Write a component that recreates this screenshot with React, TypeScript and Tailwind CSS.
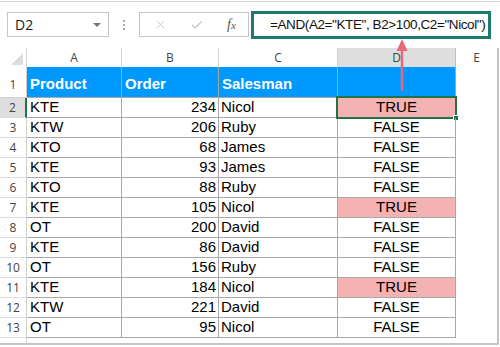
import React from 'react';
import { X, Check } from 'lucide-react';

interface RowData {
  product: string;
  order: number;
  salesman: string;
  result: boolean;
}

const rows: RowData[] = [
  { product: 'KTE', order: 234, salesman: 'Nicol', result: true },
  { product: 'KTW', order: 206, salesman: 'Ruby', result: false },
  { product: 'KTO', order: 68, salesman: 'James', result: false },
  { product: 'KTE', order: 93, salesman: 'James', result: false },
  { product: 'KTO', order: 88, salesman: 'Ruby', result: false },
  { product: 'KTE', order: 105, salesman: 'Nicol', result: true },
  { product: 'OT', order: 200, salesman: 'David', result: false },
  { product: 'KTE', order: 86, salesman: 'David', result: false },
  { product: 'OT', order: 156, salesman: 'Ruby', result: false },
  { product: 'KTE', order: 184, salesman: 'Nicol', result: true },
  { product: 'KTW', order: 221, salesman: 'David', result: false },
  { product: 'OT', order: 95, salesman: 'Nicol', result: false },
];

const cell = 'h-full border-r border-b border-[#a8a8a8] flex items-center text-[15px] text-black';

const App: React.FC = () => {
  return (
    <div className="w-[500px] h-[347px] bg-white overflow-hidden relative font-['Liberation_Sans',Arial,sans-serif]">
      <div className="h-px mt-px bg-[#d6d6d6]" />

      {/* formula bar */}
      <div className="h-[46px] flex items-start pt-[10px]">
        <div className="ml-[7px] w-[102px] h-[25px] border border-[#c6c6c6] flex items-center justify-between pl-[7px] pr-[7px] text-[14px] text-[#222] font-['Open_Sans',sans-serif]">
          <span>D2</span>
          <span className="w-0 h-0 border-l-[4px] border-r-[4px] border-t-[4px] border-l-transparent border-r-transparent border-t-[#777]" />
        </div>
        <div className="w-[30px] h-[25px] flex flex-col items-center justify-center gap-[2px]">
          <span className="w-[2px] h-[2px] bg-[#aaa]" />
          <span className="w-[2px] h-[2px] bg-[#aaa]" />
          <span className="w-[2px] h-[2px] bg-[#aaa]" />
        </div>
        <div className="w-[110px] h-[25px] border border-[#c6c6c6] flex items-center pl-[14px] gap-[23px]">
          <X size={13} strokeWidth={1.4} color="#b5b5b5" />
          <Check size={14} strokeWidth={1.8} color="#b5b5b5" />
          <span className="font-['Liberation_Serif',serif] italic text-[14px] text-[#555] leading-none">
            f<span className="text-[11px]">x</span>
          </span>
        </div>
        <div className="ml-[2px] -mt-px w-[240px] h-[28px] border-[3px] border-[#1f7a6c] flex items-center pl-[16px] text-[13.5px] tracking-[-0.4px] text-[#111] whitespace-nowrap overflow-hidden">
          <span>=AND(A2="KTE", B2&gt;100,C2="Nicol")</span>
        </div>
      </div>

      {/* grid */}
      <div className="w-[499px] border-r-2 border-b-2 border-[#c4c4c4]">
        {/* column headers */}
        <div className="flex h-[19px] text-[12px] text-[#444] font-['Open_Sans',sans-serif]">
          <div className="w-[27px] h-full border-r border-[#d0d0d0] relative">
            <svg className="absolute right-[3px] bottom-[2px]" width="12" height="12" viewBox="0 0 12 12">
              <polygon points="12,0 12,12 0,12" fill="#dcdcdc" />
            </svg>
          </div>
          <div className="w-[95px] h-full border-r border-[#d0d0d0] flex items-center justify-center">A</div>
          <div className="w-[97px] h-full border-r border-[#d0d0d0] flex items-center justify-center">B</div>
          <div className="w-[119px] h-full border-r border-[#d0d0d0] flex items-center justify-center">C</div>
          <div className="w-[118px] h-full border-r border-[#c0c0c0] bg-[#dedede] flex items-center justify-center text-[#2b4a3a]">D</div>
          <div className="flex-1 h-full flex items-center justify-center">E</div>
        </div>

        {/* header row 1 */}
        <div className="flex h-[31px]">
          <div className="w-[27px] h-full border-r border-b border-[#d0d0d0] flex items-end justify-center pb-[3px] text-[12px] text-[#444] font-['Open_Sans',sans-serif]">1</div>
          <div className="w-[95px] h-full bg-[#0099ff] border-r border-b border-[#a8a8a8] flex items-end pl-[3px] pb-[2px] text-[15px] font-bold text-white">Product</div>
          <div className="w-[97px] h-full bg-[#0099ff] border-r border-b border-[#a8a8a8] flex items-end pl-[3px] pb-[2px] text-[15px] font-bold text-white">Order</div>
          <div className="w-[119px] h-full bg-[#0099ff] border-r border-b border-[#a8a8a8] flex items-end pl-[3px] pb-[2px] text-[15px] font-bold text-white">Salesman</div>
          <div className="w-[118px] h-full bg-[#0099ff] border-r border-b border-[#a8a8a8]" />
          <div className="flex-1 h-full" />
        </div>

        {rows.map((r, i) => {
          const selected = i === 0;
          return (
            <div key={i} className="flex h-[20px]">
              <div
                className={`w-[27px] h-full border-b border-[#dcdcdc] flex items-center justify-center text-[12px] text-[#444] font-['Open_Sans',sans-serif] ${
                  selected ? 'bg-[#dedede] border-r-2 border-r-[#217346]' : 'border-r border-r-[#d0d0d0]'
                }`}
              >
                {i + 2}
              </div>
              <div className={`${cell} w-[95px] pl-[3px]`}>{r.product}</div>
              <div className={`${cell} w-[97px] justify-end pr-[2px]`}>{r.order}</div>
              <div className={`${cell} w-[119px] pl-[2px]`}>{r.salesman}</div>
              <div className={`${cell} w-[118px] justify-center relative ${r.result ? 'bg-[#f4b2b2]' : ''}`}>
                {r.result ? 'TRUE' : 'FALSE'}
                {selected && (
                  <>
                    <div className="absolute -left-[2px] -top-[2px] w-[121px] h-[23px] border-2 border-[#217346]" />
                    <div className="absolute -right-[4px] -bottom-[4px] w-[6px] h-[6px] bg-[#217346] border border-white" />
                  </>
                )}
              </div>
              <div className="flex-1 h-full" />
            </div>
          );
        })}

        {/* partial row 14 */}
        <div className="flex h-[5px]">
          <div className="w-[27px] h-full border-r border-[#d0d0d0]" />
        </div>
      </div>

      {/* callout arrow */}
      <svg className="absolute left-[395px] top-[38px]" width="14" height="54" viewBox="0 0 14 54">
        <line x1="7" y1="9" x2="7" y2="53" stroke="#e8677c" strokeWidth="2.5" />
        <polygon points="7,1 1.5,13 12.5,13" fill="#e8677c" />
      </svg>
    </div>
  );
};

export default App;
